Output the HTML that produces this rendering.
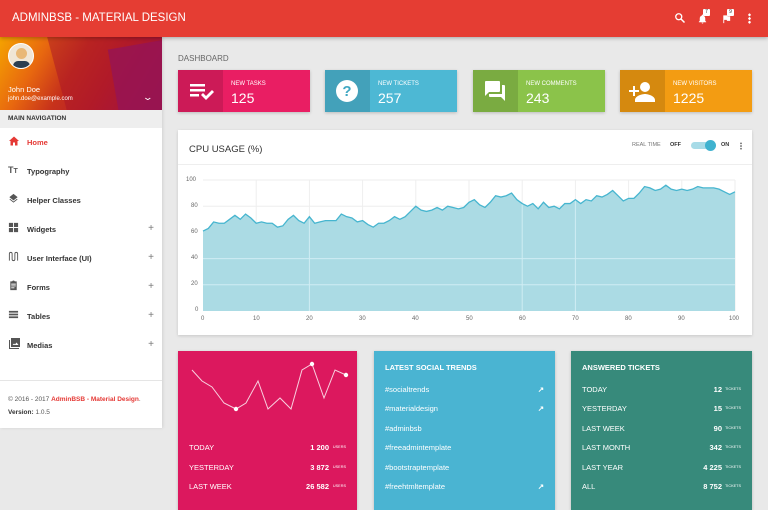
<!DOCTYPE html>
<html><head><meta charset="utf-8"><style>
*{margin:0;padding:0;box-sizing:border-box}
body{width:768px;height:510px;overflow:hidden;background:#e9e9e9;font-family:"Liberation Sans",sans-serif;position:relative}
.a{position:absolute}
.top{left:0;top:0;width:768px;height:37px;background:#e53d33;box-shadow:0 1px 4px rgba(0,0,0,.3);z-index:5}
.top .t{left:12px;top:12px;color:#fff;font-size:11.5px}
.side{left:0;top:37px;width:162px;height:391px;background:#fff;box-shadow:1px 0 3px rgba(0,0,0,.1)}
.user{left:0;top:0;width:162px;height:73px;background:linear-gradient(120deg,#f5a300 0%,#e8680f 25%,#c7321b 45%,#b8202a 65%,#a3174c 85%,#8f1656 100%);overflow:hidden}
.nav{left:0;top:73px;width:162px;height:18px;background:#eee;font-size:6.5px;font-weight:bold;color:#333;padding:5px 8px}
.mi{left:8px;font-size:7.5px;font-weight:bold;color:#333;width:146px}
.mi .ic{position:absolute;left:0;top:-3px}
.mi span.l{position:absolute;left:19px;top:0}
.mi .p{position:absolute;right:0;top:-2px;color:#777;font-weight:normal;font-size:10px}
.ib{top:70px;width:132px;height:42px;box-shadow:0 1px 3px rgba(0,0,0,.2);color:#fff}
.ib .d{left:0;top:0;width:45px;height:42px;background:rgba(0,0,0,.12)}
.ib .k{left:53px;top:11px;font-size:6px}
.ib .v{left:53px;top:20px;font-size:14px}
.card{background:#fff;box-shadow:0 1px 3px rgba(0,0,0,.15)}
.bc{top:351px;height:159px;box-shadow:0 1px 3px rgba(0,0,0,.2);color:#fff;font-size:7.5px}
.row{position:absolute;left:11px;right:11px}
.row b{position:absolute;right:17px;font-size:7.5px}
.row i{position:absolute;right:0;top:2px;font-size:3.8px;font-style:normal}
.ax{font-size:6px;color:#666}
</style></head><body>
<div class="a top"><div class="a t">ADMINBSB - MATERIAL DESIGN</div>
<svg class="a" style="left:674px;top:12px" width="12" height="12" viewBox="0 0 24 24"><circle cx="9.5" cy="9.5" r="6" fill="none" stroke="#fff" stroke-width="2.6"/><path d="M14 14l7 7" stroke="#fff" stroke-width="3"/></svg>
<svg class="a" style="left:697px;top:13px" width="11" height="12" viewBox="0 0 24 24"><path fill="#fff" d="M12 22a2 2 0 0 0 2-2h-4a2 2 0 0 0 2 2zm6-6V11c0-3-1.6-5.6-4.5-6.3V4a1.5 1.5 0 0 0-3 0v.7C7.6 5.4 6 8 6 11v5l-2 2v1h16v-1z"/></svg>
<div class="a" style="left:703px;top:9px;width:7px;height:7px;background:#fff;border-radius:1px;font-size:5px;color:#333;text-align:center;line-height:7px">7</div>
<svg class="a" style="left:721px;top:13px" width="11" height="12" viewBox="0 0 24 24"><path fill="#fff" d="M14.4 6L14 4H5v17h2v-7h5.6l.4 2h7V6z"/></svg>
<div class="a" style="left:727px;top:9px;width:7px;height:7px;background:#fff;border-radius:1px;font-size:5px;color:#333;text-align:center;line-height:7px">9</div>
<div class="a" style="left:748px;top:13px;width:3px;height:11px;background:radial-gradient(circle,#fff 1.2px,transparent 1.4px) 0 0/3px 3.7px"></div>
</div>
<div class="a side">
<div class="a user">
<div class="a" style="left:60px;top:-20px;width:120px;height:120px;background:rgba(170,20,40,.5);transform:rotate(-15deg)"></div>
<div class="a" style="left:115px;top:5px;width:80px;height:90px;background:rgba(150,20,85,.8);transform:rotate(-10deg)"></div>
<div class="a" style="left:8px;top:6px;width:26px;height:26px;border-radius:50%;background:#f0e6d6;border:1px solid #fff;overflow:hidden"><div class="a" style="left:7px;top:4px;width:11px;height:11px;border-radius:50%;background:#e9b877"></div><div class="a" style="left:4px;top:17px;width:17px;height:10px;background:#2c3e50;border-radius:5px 5px 0 0"></div></div>
<div class="a" style="left:8px;top:48px;color:#fff;font-size:7.5px">John Doe</div>
<div class="a" style="left:8px;top:59px;color:#fff;font-size:6px">john.doe@example.com</div>
<div class="a" style="left:144px;top:55px;color:#fff;font-size:9px;transform:scaleX(1.5)">⌄</div>
</div>
<div class="a nav">MAIN NAVIGATION</div>
<div class="a mi" style="top:101px;color:#e53935"><svg class="ic" width="12" height="11" viewBox="0 0 24 22"><path fill="#e53935" d="M10 21v-6h4v6h5v-9h3L12 3 2 12h3v9z"/></svg><span class="l">Home</span></div>
<div class="a mi" style="top:130px"><span class="ic" style="font-size:9px;color:#555;top:-2px">T<small style="font-size:7px">T</small></span><span class="l">Typography</span></div>
<div class="a mi" style="top:159px"><svg class="ic" width="11" height="11" viewBox="0 0 24 24"><path fill="#555" d="M12 16l7.4-5.7L21 9l-9-7-9 7 1.6 1.3zm0 2.5l-7.4-5.7L3 14l9 7 9-7-1.6-1.3z"/></svg><span class="l">Helper Classes</span></div>
<div class="a mi" style="top:188px"><svg class="ic" width="11" height="11" viewBox="0 0 24 24"><path fill="#555" d="M2 2h9v9H2zm11 0h9v9h-9zM2 13h9v9H2zm11 0h9v9h-9z"/></svg><span class="l">Widgets</span><span class="p">+</span></div>
<div class="a mi" style="top:217px"><svg class="ic" width="11" height="11" viewBox="0 0 24 24"><path fill="none" stroke="#555" stroke-width="2" d="M3 21V6q0-3 3-3t3 3v12q0 3 3 3t3-3V6q0-3 3-3t3 3v15"/></svg><span class="l">User Interface (UI)</span><span class="p">+</span></div>
<div class="a mi" style="top:246px"><svg class="ic" width="11" height="11" viewBox="0 0 24 24"><path fill="#555" d="M19 3h-4.2C14.4 1.8 13.3 1 12 1s-2.4.8-2.8 2H5v19h14zM7 8h10v2H7zm0 4h10v2H7zm0 4h7v2H7z"/></svg><span class="l">Forms</span><span class="p">+</span></div>
<div class="a mi" style="top:275px"><svg class="ic" width="11" height="11" viewBox="0 0 24 24"><path fill="#555" d="M2 4h20v4H2zm0 6h20v4H2zm0 6h20v4H2z"/></svg><span class="l">Tables</span><span class="p">+</span></div>
<div class="a mi" style="top:304px"><svg class="ic" width="13" height="11" viewBox="0 0 26 22"><path fill="#555" d="M2 4h2v16h18v2H2zm4-4h18v18H6zm3 14h12l-4-5-3 4-2-2z"/></svg><span class="l">Medias</span><span class="p">+</span></div>
<div class="a" style="left:0;top:343px;width:162px;border-top:1px solid #e5e5e5"></div>
<div class="a" style="left:8px;top:359px;font-size:6.5px;color:#555">© 2016 - 2017 <span style="color:#e53935;font-weight:bold">AdminBSB - Material Design</span>.</div>
<div class="a" style="left:8px;top:372px;font-size:6.5px;color:#555"><b style="color:#333">Version:</b> 1.0.5</div>
</div>

<div class="a" style="left:178px;top:54px;font-size:8px;color:#666">DASHBOARD</div>
<div class="a ib" style="left:178px;background:#e91e63"><div class="a d"></div>
<svg class="a" style="left:10px;top:9px" width="26" height="24" viewBox="0 0 26 24"><path fill="#fff" d="M2 5h15v2.5H2zm0 5h15v2.5H2zm0 5h9v2.5H2zm11 1l2-2 3 3 6-6 2 2-8 8z"/></svg>
<div class="a k">NEW TASKS</div><div class="a v">125</div></div>
<div class="a ib" style="left:325px;background:#4db8d4"><div class="a d"></div>
<svg class="a" style="left:10px;top:9px" width="24" height="24" viewBox="0 0 24 24"><circle cx="12" cy="12" r="11" fill="#fff"/><text x="12" y="17" text-anchor="middle" font-size="15" font-weight="bold" fill="#3fa7c2" font-family="Liberation Sans">?</text></svg>
<div class="a k">NEW TICKETS</div><div class="a v">257</div></div>
<div class="a ib" style="left:473px;background:#8bc34a"><div class="a d"></div>
<svg class="a" style="left:10px;top:9px" width="24" height="24" viewBox="0 0 24 24"><path fill="#fff" d="M21 6h-2v9H6v2c0 .6.4 1 1 1h11l4 4V7c0-.6-.4-1-1-1zm-4 6V3c0-.6-.4-1-1-1H3c-.6 0-1 .4-1 1v14l4-4h10c.6 0 1-.4 1-1z"/></svg>
<div class="a k">NEW COMMENTS</div><div class="a v">243</div></div>
<div class="a ib" style="left:620px;background:#f39c12"><div class="a d"></div>
<svg class="a" style="left:8px;top:9px" width="28" height="24" viewBox="0 0 28 24"><circle cx="17" cy="8" r="5" fill="#fff"/><path fill="#fff" d="M7 21c0-4 7-6 10-6s10 2 10 6v2H7zM5 7h2v4h4v2H7v4H5v-4H1v-2h4z"/></svg>
<div class="a k">NEW VISITORS</div><div class="a v">1225</div></div>

<div class="a card" style="left:178px;top:130px;width:574px;height:205px">
<div class="a" style="left:11px;top:14px;font-size:9.5px;color:#333">CPU USAGE (%)</div>
<div class="a" style="left:454px;top:12px;font-size:5.5px;color:#777">REAL TIME</div>
<div class="a" style="left:492px;top:12px;font-size:5.5px;color:#333;font-weight:bold">OFF</div>
<div class="a" style="left:513px;top:12px;width:24px;height:7px;border-radius:4px;background:#a7dbe7"></div>
<div class="a" style="left:527px;top:10px;width:11px;height:11px;border-radius:50%;background:#3fb2cf"></div>
<div class="a" style="left:543px;top:12px;font-size:5.5px;color:#333;font-weight:bold">ON</div>
<div class="a" style="left:562px;top:12px;width:2px;height:8px;background:radial-gradient(circle,#777 .9px,transparent 1px) 0 0/2px 2.7px"></div>
<div class="a" style="left:0;top:34px;width:574px;border-top:1px solid #eee"></div>
</div>
<svg class="a" style="left:203px;top:180px;overflow:visible" width="532" height="131" viewBox="0 0 100 100" preserveAspectRatio="none">
<g stroke="#eee" stroke-width="1" vector-effect="non-scaling-stroke">
<path vector-effect="non-scaling-stroke" d="M10 0V100M20 0V100M30 0V100M40 0V100M50 0V100M60 0V100M70 0V100M80 0V100M90 0V100M100 0V100M0 0H100M0 20H100M0 40H100M0 60H100M0 80H100"/></g>
<polygon fill="#abdbe4" points="0,100 0,39 1,37 2,32 3,33 4,33 5,30 6,27 7,30 8,26 9,29 10,33 11,32 12,33 13,33 14,36 15,35 16,30 17,27 18,31 19,33 20,28 21,33 22,32 23,31 24,31 25,31 26,26 27,28 28,29 29,32 30,31 31,34 32,36 33,33 34,33 35,31 36,28 37,30 38,28 39,24 40,20 41,23 42,24 43,23 44,21 45,23 46,20 47,21 48,22 49,21 50,17 51,15 52,19 53,21 54,17 55,12 56,13 57,12 58,10 59,15 60,18 61,20 62,18 63,22 64,17 65,21 66,20 67,22 68,18 69,18 70,15 71,18 72,15 73,16 74,12 75,13 76,11 77,8 78,12 79,16 80,14 81,14 82,10 83,5 84,6 85,8 86,7 87,4 88,7 89,8 90,7 91,8 92,7 93,5 94,6 95,6 96,6 97,7 98,9 99,11 100,9 100,100"/>
<g stroke="#d0edf3" stroke-width="1"><path vector-effect="non-scaling-stroke" d="M20 30V100M60 18V100M70 15V100M0 60H100M0 80H100"/></g>
<polyline fill="none" stroke="#46b5cf" stroke-width="1.3" vector-effect="non-scaling-stroke" points="0,39 1,37 2,32 3,33 4,33 5,30 6,27 7,30 8,26 9,29 10,33 11,32 12,33 13,33 14,36 15,35 16,30 17,27 18,31 19,33 20,28 21,33 22,32 23,31 24,31 25,31 26,26 27,28 28,29 29,32 30,31 31,34 32,36 33,33 34,33 35,31 36,28 37,30 38,28 39,24 40,20 41,23 42,24 43,23 44,21 45,23 46,20 47,21 48,22 49,21 50,17 51,15 52,19 53,21 54,17 55,12 56,13 57,12 58,10 59,15 60,18 61,20 62,18 63,22 64,17 65,21 66,20 67,22 68,18 69,18 70,15 71,18 72,15 73,16 74,12 75,13 76,11 77,8 78,12 79,16 80,14 81,14 82,10 83,5 84,6 85,8 86,7 87,4 88,7 89,8 90,7 91,8 92,7 93,5 94,6 95,6 96,6 97,7 98,9 99,11 100,9"/>
</svg>
<div class="a ax" style="left:186px;top:177px">100</div><div class="a ax" style="left:191px;top:203px">80</div><div class="a ax" style="left:191px;top:229px">60</div><div class="a ax" style="left:191px;top:255px">40</div><div class="a ax" style="left:191px;top:281px">20</div><div class="a ax" style="left:195px;top:307px">0</div>
<div class="a ax" style="left:201px;top:316px">0</div><div class="a ax" style="left:253px;top:316px">10</div><div class="a ax" style="left:306px;top:316px">20</div><div class="a ax" style="left:359px;top:316px">30</div><div class="a ax" style="left:412px;top:316px">40</div><div class="a ax" style="left:466px;top:316px">50</div><div class="a ax" style="left:519px;top:316px">60</div><div class="a ax" style="left:572px;top:316px">70</div><div class="a ax" style="left:625px;top:316px">80</div><div class="a ax" style="left:678px;top:316px">90</div><div class="a ax" style="left:729px;top:316px">100</div>

<div class="a bc" style="left:178px;width:179px;background:#dc185e">
<svg class="a" style="left:0;top:0" width="179" height="80"><polyline fill="none" stroke="#fff" stroke-opacity=".8" stroke-width="1" points="14,19 24,30 34,36 46,52 58,58 68,52 80,30 90,58 102,47 113,58 124,19 134,13 146,47 157,19 168,24"/><circle cx="58" cy="58" r="2.2" fill="#fff"/><circle cx="134" cy="13" r="2.2" fill="#fff"/><circle cx="168" cy="24" r="2.2" fill="#fff"/></svg>
<div class="row" style="top:92px">TODAY<b>1 200</b><i>USERS</i></div>
<div class="row" style="top:112px">YESTERDAY<b>3 872</b><i>USERS</i></div>
<div class="row" style="top:131px">LAST WEEK<b>26 582</b><i>USERS</i></div>
</div>
<div class="a bc" style="left:374px;width:181px;background:#4ab4d2">
<div class="row" style="top:12px;font-weight:bold">LATEST SOCIAL TRENDS</div>
<div class="row" style="top:34px">#socialtrends<b style="right:0">↗</b></div>
<div class="row" style="top:53px">#materialdesign<b style="right:0">↗</b></div>
<div class="row" style="top:73px">#adminbsb</div>
<div class="row" style="top:92px">#freeadmintemplate</div>
<div class="row" style="top:112px">#bootstraptemplate</div>
<div class="row" style="top:131px">#freehtmltemplate<b style="right:0">↗</b></div>
</div>
<div class="a bc" style="left:571px;width:181px;background:#378a7b">
<div class="row" style="top:12px;font-weight:bold">ANSWERED TICKETS</div>
<div class="row" style="top:34px">TODAY<b style="right:19px">12</b><i>TICKETS</i></div>
<div class="row" style="top:53px">YESTERDAY<b style="right:19px">15</b><i>TICKETS</i></div>
<div class="row" style="top:73px">LAST WEEK<b style="right:19px">90</b><i>TICKETS</i></div>
<div class="row" style="top:92px">LAST MONTH<b style="right:19px">342</b><i>TICKETS</i></div>
<div class="row" style="top:112px">LAST YEAR<b style="right:19px">4 225</b><i>TICKETS</i></div>
<div class="row" style="top:131px">ALL<b style="right:19px">8 752</b><i>TICKETS</i></div>
</div>
</body></html>
